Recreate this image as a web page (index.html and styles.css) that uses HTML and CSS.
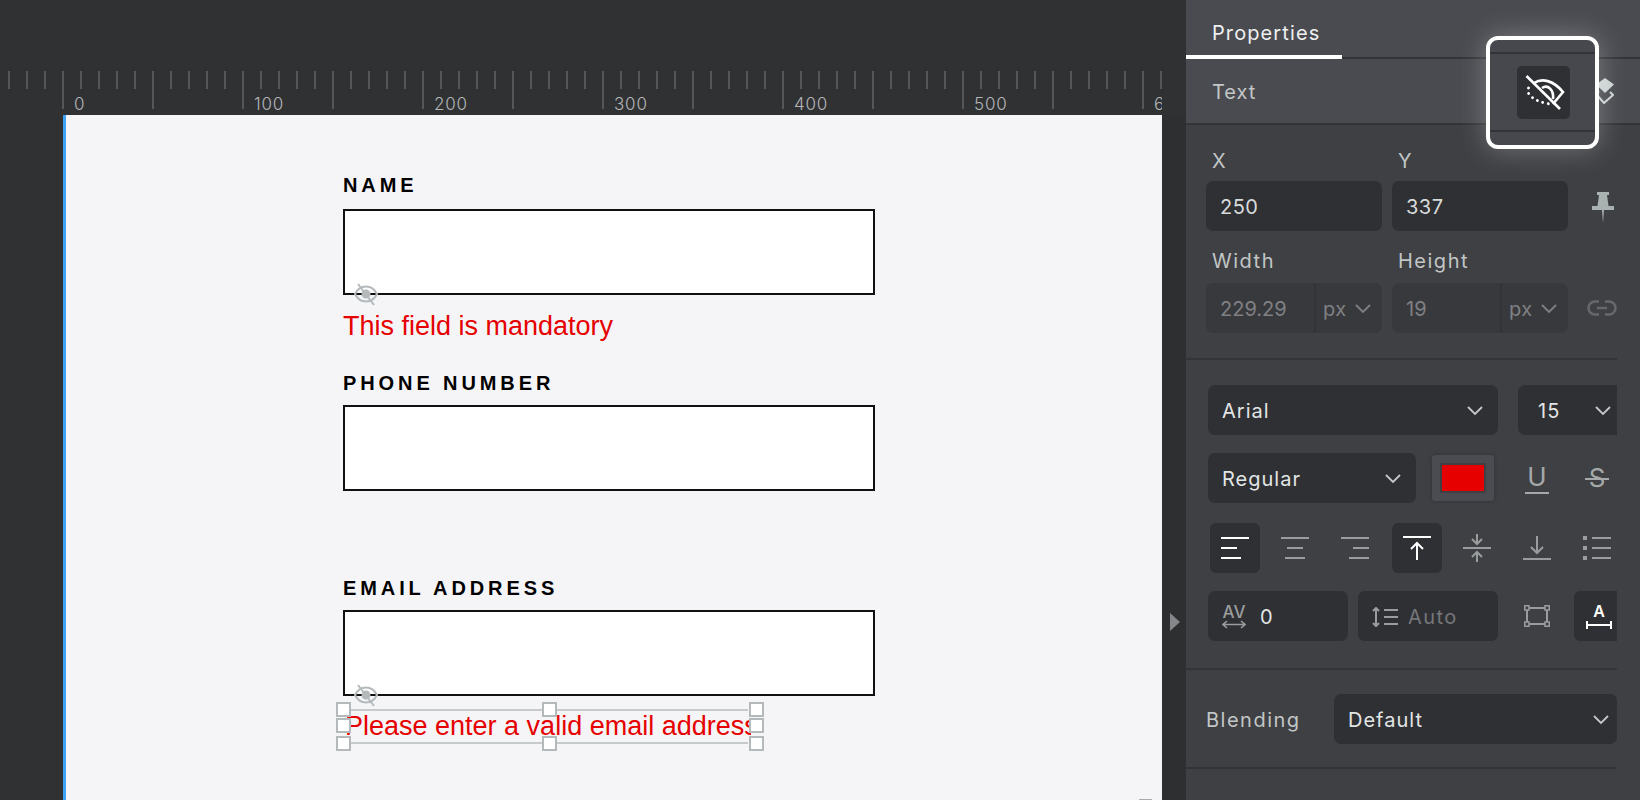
FILE: index.html
```html
<!DOCTYPE html>
<html lang="en">
<head>
  <meta charset="UTF-8"/>
  <title>Form properties</title>
  <link rel="stylesheet" href="styles.css">
</head>
<body>

<!-- Canvas -->
<div class="stage">
  <div class="ruler">
    <span class="ruler-num">0</span>
    <span class="ruler-num">100</span>
    <span class="ruler-num">200</span>
    <span class="ruler-num">300</span>
    <span class="ruler-num">400</span>
    <span class="ruler-num">500</span>
    <span class="ruler-num">600</span>
  </div>
  <div class="stage-body">
    <div class="artboard">
      <div class="form">
        <div class="form-label label-name">NAME</div>
        <div class="form-box">
          <svg class="eye-small" width="26" height="26" viewBox="0 0 26 26"><path d="M2 13 C7 3 19 3 24 13 C19 23 7 23 2 13Z" fill="none" stroke="#b4babb" stroke-width="2"/><circle cx="13" cy="13" r="4.500" fill="#b4babb"/><path d="M5 3 L21 24" stroke="#b4babb" stroke-width="2"/></svg>
        </div>
        <div class="form-error">This field is mandatory</div>
        <div class="form-label label-phone">PHONE NUMBER</div>
        <div class="form-box"></div>
        <div class="form-label label-email">EMAIL ADDRESS</div>
        <div class="form-box">
          <svg class="eye-small" width="26" height="26" viewBox="0 0 26 26"><path d="M2 13 C7 3 19 3 24 13 C19 23 7 23 2 13Z" fill="none" stroke="#b4babb" stroke-width="2"/><circle cx="13" cy="13" r="4.500" fill="#b4babb"/><path d="M5 3 L21 24" stroke="#b4babb" stroke-width="2"/></svg>
        </div>
        <div class="form-error selected-text">
          <span class="clip-text">Please enter a valid email address</span>
          <i class="handle h-tl"></i><i class="handle h-tc"></i><i class="handle h-tr"></i>
          <i class="handle h-ml"></i><i class="handle h-mr"></i>
          <i class="handle h-bl"></i><i class="handle h-bc"></i><i class="handle h-br"></i>
        </div>
      </div>
      <div class="corner-mark"></div>
    </div>
    <div class="gutter"><span class="collapse-arrow"></span></div>
  </div>
</div>

<!-- Properties panel -->
<aside class="panel">
  <div class="tabs"><div class="tab">Properties</div></div>
  <div class="type-row">
    <span>Text</span>
    <svg class="layers" width="18" height="26" viewBox="0 0 18 26"><path d="M9 0 L18 6.500 L9 15 L0 6.500Z" fill="#ccd3d3"/><path d="M3 13 L0 16 L8 25 L17 17 L14 14" fill="none" stroke="#ccd3d3" stroke-width="2"/></svg>
  </div>

  <div class="props">
    <section class="sec sec-pos">
      <div class="pos-grid">
        <label class="lbl">X</label>
        <label class="lbl">Y</label>
        <span></span>
        <div class="inp">250</div>
        <div class="inp">337</div>
        <svg class="pin" width="22" height="31" viewBox="0 0 22 31"><path d="M5 0 H17 V3 H15 L16.500 14 H22 V18 H12 L11 31 L10 18 H0 V14 H5.500 L7 3 H5Z" fill="#a9b1b1"/></svg>
        <label class="lbl lbl-second">Width</label>
        <label class="lbl lbl-second">Height</label>
        <span></span>
        <div class="inp inp-unit">
          <span class="inp-val">229.29</span>
          <span class="inp-px">px <svg width="16" height="10" viewBox="0 0 16 10"><path d="M1 1 L8 8 L15 1" fill="none" stroke="#7f8084" stroke-width="1.800"/></svg></span>
        </div>
        <div class="inp inp-unit">
          <span class="inp-val">19</span>
          <span class="inp-px">px <svg width="16" height="10" viewBox="0 0 16 10"><path d="M1 1 L8 8 L15 1" fill="none" stroke="#7f8084" stroke-width="1.800"/></svg></span>
        </div>
        <svg class="link" width="30" height="16" viewBox="0 0 30 16"><path d="M12 1.500 H8 A6.500 6.500 0 0 0 8 14.500 H12 M18 1.500 H22 A6.500 6.500 0 0 1 22 14.500 H18 M10 8 H20" fill="none" stroke="#67686c" stroke-width="2.500"/></svg>
      </div>
    </section>

    <section class="sec sec-text">
      <div class="row">
        <div class="sel sel-font">Arial <svg class="chev" width="16" height="10" viewBox="0 0 16 10"><path d="M1 1 L8 8 L15 1" fill="none" stroke="#c4c8c8" stroke-width="1.800"/></svg></div>
        <div class="sel sel-size">15 <svg class="chev" width="16" height="10" viewBox="0 0 16 10"><path d="M1 1 L8 8 L15 1" fill="none" stroke="#c4c8c8" stroke-width="1.800"/></svg></div>
      </div>
      <div class="row row-style">
        <div class="sel sel-weight">Regular <svg class="chev" width="16" height="10" viewBox="0 0 16 10"><path d="M1 1 L8 8 L15 1" fill="none" stroke="#c4c8c8" stroke-width="1.800"/></svg></div>
        <div class="swatch"><span class="swatch-red"></span></div>
        <span class="glyph glyph-u">U</span>
        <span class="glyph glyph-s">S</span>
      </div>
      <div class="row row-icons">
        <span class="ico on"><svg width="28" height="24" viewBox="0 0 28 24"><path d="M0 2 H28 M0 12 H16 M0 22 H20" stroke="#fff" stroke-width="2"/></svg></span>
        <span class="ico"><svg width="28" height="24" viewBox="0 0 28 24"><path d="M0 2 H28 M6 12 H22 M4 22 H24" stroke="#9a9d9d" stroke-width="2"/></svg></span>
        <span class="ico"><svg width="28" height="24" viewBox="0 0 28 24"><path d="M0 2 H28 M12 12 H28 M8 22 H28" stroke="#9a9d9d" stroke-width="2"/></svg></span>
        <span class="ico on ico-valign"><svg width="28" height="26" viewBox="0 0 28 26"><path d="M0 2 H28 M14 25 V8 M8 14 L14 8 L20 14" fill="none" stroke="#fff" stroke-width="2"/></svg></span>
        <span class="ico"><svg width="28" height="28" viewBox="0 0 28 28"><path d="M0 14 H28 M14 0 V9 M9 5 L14 10 L19 5 M14 28 V19 M9 23 L14 18 L19 23" fill="none" stroke="#9a9d9d" stroke-width="2"/></svg></span>
        <span class="ico"><svg width="28" height="26" viewBox="0 0 28 26"><path d="M0 24 H28 M14 1 V18 M8 12 L14 18 L20 12" fill="none" stroke="#9a9d9d" stroke-width="2"/></svg></span>
        <span class="ico"><svg width="28" height="24" viewBox="0 0 28 24"><path d="M9 2 H28 M9 12 H28 M9 22 H28" stroke="#9a9d9d" stroke-width="2"/><path d="M0 0 H4 V4 H0Z M0 10 H4 V14 H0Z M0 20 H4 V24 H0Z" fill="#9a9d9d"/></svg></span>
      </div>
      <div class="row row-metrics">
        <div class="sel sel-metric">
          <span class="av">AV<svg width="24" height="9" viewBox="0 0 24 9"><path d="M1 4.500 H23 M5 1 L1 4.500 L5 8 M19 1 L23 4.500 L19 8" fill="none" stroke="#9a9d9d" stroke-width="1.600"/></svg></span>
          <span>0</span>
        </div>
        <div class="sel sel-metric sel-lead">
          <svg width="26" height="20" viewBox="0 0 26 20"><path d="M4 1 V19 M1 4 L4 1 L7 4 M1 16 L4 19 L7 16 M12 3 H26 M12 10 H26 M12 17 H26" fill="none" stroke="#9a9d9d" stroke-width="2"/></svg>
          <span class="dim">Auto</span>
        </div>
        <svg class="bbox" width="26" height="22" viewBox="0 0 26 22"><path d="M3 3 H23 V19 H3Z" fill="none" stroke="#9a9d9d" stroke-width="2"/><path d="M0.750 0.750 H5 V5 H0.750Z M21 0.750 H25.250 V5 H21Z M0.750 17 H5 V21.250 H0.750Z M21 17 H25.250 V21.250 H21Z" fill="#3f4044" stroke="#9a9d9d" stroke-width="1.500"/></svg>
        <span class="ico on ico-width"><span class="a-mark">A</span><svg width="26" height="8" viewBox="0 0 26 8"><path d="M1 0 V8 M25 0 V8 M1 4 H25" fill="none" stroke="#fff" stroke-width="2"/></svg></span>
      </div>
    </section>

    <section class="sec sec-blend">
      <span class="blend-lbl">Blending</span>
      <div class="sel sel-blend">Default <svg class="chev" width="16" height="10" viewBox="0 0 16 10"><path d="M1 1 L8 8 L15 1" fill="none" stroke="#c4c8c8" stroke-width="1.800"/></svg></div>
    </section>
  </div>

  <!-- Callout over the visibility button -->
  <div class="callout">
    <div class="callout-bar"></div>
    <div class="callout-mid">
      <span class="eye-btn">
        <svg width="53" height="53" viewBox="0 0 53 53"><path d="M9.500 10 L43 43" stroke="#fff" stroke-width="2.600"/><path d="M17 17 C25 12 36 14 46 26 L36 38" fill="none" stroke="#fff" stroke-width="2.600"/><path d="M25 22 C31 18 37 24 36 33" fill="none" stroke="#fff" stroke-width="2.600"/><path d="M11.500 22 C8 28 18 36 33 38" fill="none" stroke="#fff" stroke-width="2.800" stroke-linecap="round" stroke-dasharray="0.100 5.600"/></svg>
      </span>
    </div>
    <div class="callout-bar"></div>
  </div>
</aside>

</body>
</html>
```

FILE: styles.css
```css
html, body {
  margin: 0; padding: 0; overflow: hidden; background: #303133;
}
body {
  display: flex;
  width: 1640px;
  height: 800px;
  font-family: Inter, "Open Sans", sans-serif;
}

/* Canvas */
.stage {
  width: 1186px;
  height: 800px;
  flex: none;
}
.ruler {
  width: 1162px;
  height: 115px;
  box-sizing: border-box;
  padding: 94px 0 0 74px;
  display: flex;
  overflow: hidden;
  background-color: #303133;
  background-image:
    linear-gradient(90deg, #55565a 2px, transparent 2px),
    linear-gradient(90deg, #55565a 2px, transparent 2px);
  background-size: 18px 18px, 90px 38px;
  background-position: 8px 71px, 62px 71px;
  background-repeat: repeat-x;
}
.ruler-num {
  flex: none;
  width: 180px;
  font-size: 17px;
  line-height: 21px;
  letter-spacing: .8px;
  font-weight: 300;
  color: #b4b6b8;
}
.stage-body {
  display: flex;
  height: 685px;
}
.artboard {
  position: relative;
  width: 1099px;
  margin-left: 63px;
  box-sizing: border-box;
  border-left: 3px solid #3ea2f2;
  background: #f5f5f8;
  overflow: hidden;
}
.gutter {
  width: 24px;
  position: relative;
  background: #2e2f31;
}
.collapse-arrow {
  position: absolute;
  left: 8px;
  top: 498px;
  border-left: 10px solid #85868a;
  border-top: 9px solid transparent;
  border-bottom: 9px solid transparent;
}
.corner-mark {
  position: absolute;
  right: 10px;
  bottom: 0;
  width: 13px;
  height: 1px;
  background: #aaa;
}

/* Form */
.form {
  width: 532px;
  margin-left: 277px;
  font-family: "Liberation Sans", Arial, sans-serif;
}
.form-label {
  font-size: 20px;
  line-height: 24px;
  font-weight: bold;
  letter-spacing: 3.900px;
  color: #000;
}
.label-name { padding-top: 58px; margin-bottom: 12px; }
.label-phone { margin-top: 29px; margin-bottom: 10px; }
.label-email { margin-top: 85px; margin-bottom: 10px; }
.form-box {
  position: relative;
  height: 86px;
  box-sizing: border-box;
  border: 2px solid #111;
  background: #fff;
}
.eye-small {
  position: absolute;
  left: 8px;
  bottom: -14px;
}
.form-error {
  margin-top: 15px;
  font-size: 27px;
  line-height: 32px;
  color: #e60000;
}
.selected-text {
  position: relative;
  width: 405px;
  height: 31px;
  margin: 13px 0 0 0;
  border-top: 2px solid #c6cacb;
  border-bottom: 2px solid #c6cacb;
}
.clip-text {
  display: block;
  width: 406px;
  margin: -1px 0 0 2px;
  overflow: hidden;
  white-space: nowrap;
}
.handle {
  position: absolute;
  width: 11px;
  height: 11px;
  border: 2.500px solid #b4babb;
  background: #fff;
  background-clip: padding-box;
}
.h-tl, .h-tc, .h-tr { top: -9px; }
.h-ml, .h-mr { top: 7px; }
.h-bl, .h-bc, .h-br { top: 25px; }
.h-tl, .h-ml, .h-bl { left: -7px; }
.h-tc, .h-bc { left: 199px; }
.h-tr, .h-mr, .h-br { left: 406px; }

/* Panel */
.panel {
  position: relative;
  width: 454px;
  height: 800px;
  flex: none;
  background: #3f4044;
  color: #d8dbdb;
  font-size: 20px;
}
.tabs {
  height: 59px;
  box-sizing: border-box;
  background: linear-gradient(#4a4b50 57px, #333437 57px);
}
.tab {
  width: 156px;
  height: 59px;
  box-sizing: border-box;
  padding: 19px 0 0 26px;
  border-bottom: 4px solid #fff;
  color: #eef0f0;
  line-height: 28px;
  letter-spacing: 1.100px;
}
.type-row {
  position: relative;
  height: 66px;
  box-sizing: border-box;
  padding: 2px 0 0 26px;
  display: flex;
  align-items: center;
  color: #c2c6c6;
  background: #4a4b50;
  border-bottom: 2px solid #333437;
  letter-spacing: 1px;
}
.layers {
  position: absolute;
  left: 410px;
  top: 19px;
}
.props {
  width: 431px;
  overflow: hidden;
}
.sec {
  box-sizing: border-box;
  border-bottom: 2px solid #333437;
}
.sec-pos {
  height: 235px;
}
.pos-grid {
  display: grid;
  grid-template-columns: 176px 176px 39px;
  grid-template-rows: 56px 50px 52px 50px;
  column-gap: 10px;
  padding-left: 20px;
  align-items: end;
}
.lbl {
  padding: 0 0 8px 6px;
  line-height: 24px;
  color: #c2c6c6;
  font-size: 20px;
  letter-spacing: 1.500px;
}
.lbl-second { padding-bottom: 10px; }
.inp {
  height: 50px;
  box-sizing: border-box;
  padding: 2px 0 0 14px;
  display: flex;
  align-items: center;
  background: #2f3033;
  border-radius: 7px;
  letter-spacing: .5px;
}
.pin {
  justify-self: end;
  margin-bottom: 8px;
  margin-right: 3px;
}
.inp-unit {
  padding: 0;
  background: #38393c;
  color: #7f8084;
}
.inp-val {
  width: 110px;
  height: 50px;
  flex: none;
  padding-left: 14px;
  box-sizing: border-box;
  line-height: 52px;
  letter-spacing: 0;
  border-right: 2px solid #333437;
}
.inp-px {
  flex: 1;
  padding: 2px 0 0 7px;
  display: flex;
  align-items: center;
  gap: 8px;
}
.link {
  justify-self: end;
  margin-bottom: 17px;
}
.sec-text {
  height: 310px;
  padding: 25px 0 0 22px;
}
.row {
  display: flex;
  height: 50px;
}
.row-style { margin-top: 18px; align-items: center; }
.row-icons { margin-top: 20px; margin-left: 2px; gap: 10px; }
.row-metrics { margin-top: 18px; gap: 10px; align-items: center; }
.sel {
  position: relative;
  height: 50px;
  box-sizing: border-box;
  padding: 2px 0 0 14px;
  display: flex;
  align-items: center;
  flex: none;
  background: #2f3033;
  border-radius: 7px;
  color: #e2e5e5;
  letter-spacing: 1px;
}
.chev {
  position: absolute;
  right: 15px;
  top: 21px;
}
.sel-font { width: 290px; }
.sel-size { width: 120px; margin-left: 20px; padding-left: 20px; }
.sel-size .chev { right: 27px; }
.sel-weight { width: 208px; }
.swatch {
  width: 62px;
  height: 46px;
  margin-left: 16px;
  display: flex;
  align-items: center;
  justify-content: center;
  background: #4b4c51;
  border-radius: 3px;
  box-shadow: 0 0 4px rgba(0,0,0,.25);
}
.swatch-red {
  width: 42px;
  height: 26px;
  background: #e60000;
  border: 2px solid #3f4044;
}
.glyph {
  color: #a5a9a9;
  font-size: 26px;
  line-height: 30px;
  text-align: center;
}
.glyph-u {
  width: 24px;
  margin-left: 31px;
  border-bottom: 2px solid #a5a9a9;
}
.glyph-s {
  position: relative;
  width: 24px;
  margin-left: 36px;
}
.glyph-s::after {
  content: "";
  position: absolute;
  left: 0;
  right: 0;
  top: 15px;
  height: 2px;
  background: #a5a9a9;
}
.ico {
  flex: none;
  width: 50px;
  height: 50px;
  display: flex;
  align-items: center;
  justify-content: center;
  border-radius: 6px;
}
.ico.on { background: #2f3033; }
.ico-valign { margin-left: 2px; }
.sel-metric {
  width: 140px;
  gap: 14px;
}
.sel-metric svg { flex: none; }
.sel-lead { gap: 10px; }
.dim { letter-spacing: 1.400px; }
.av {
  display: flex;
  flex-direction: column;
  align-items: center;
  font-size: 17px;
  line-height: 15px;
  font-weight: 500;
  letter-spacing: 0;
  color: #9a9d9d;
}
.dim { color: #76777b; }
.bbox { flex: none; margin-left: 16px; }
.ico-width {
  margin-left: 14px;
  flex-direction: column;
  gap: 1px;
}
.a-mark {
  font-size: 16px;
  line-height: 17px;
  font-weight: 600;
  color: #fff;
}
.sec-blend {
  height: 99px;
  padding: 24px 0 0 20px;
  display: flex;
}
.blend-lbl {
  width: 128px;
  line-height: 52px;
  color: #c2c6c6;
  letter-spacing: 1.500px;
}
.sel-blend { width: 283px; }
.sel-blend .chev { right: 8px; }

/* Callout */
.callout {
  position: absolute;
  left: 300px;
  top: 36px;
  width: 113px;
  height: 113px;
  box-sizing: border-box;
  display: flex;
  flex-direction: column;
  padding-top: 12px;
  border: 4px solid #fff;
  border-radius: 12px;
  background: #47484d;
  box-shadow: 0 0 28px rgba(255,255,255,.28);
}
.callout-bar {
  height: 2px;
  background: #333437;
}
.callout-mid {
  height: 76px;
  padding-left: 2px;
  display: flex;
  align-items: center;
  justify-content: center;
}
.eye-btn {
  width: 53px;
  height: 53px;
  background: #2f3033;
  border-radius: 5px;
}
.eye-btn svg { display: block; }
```
